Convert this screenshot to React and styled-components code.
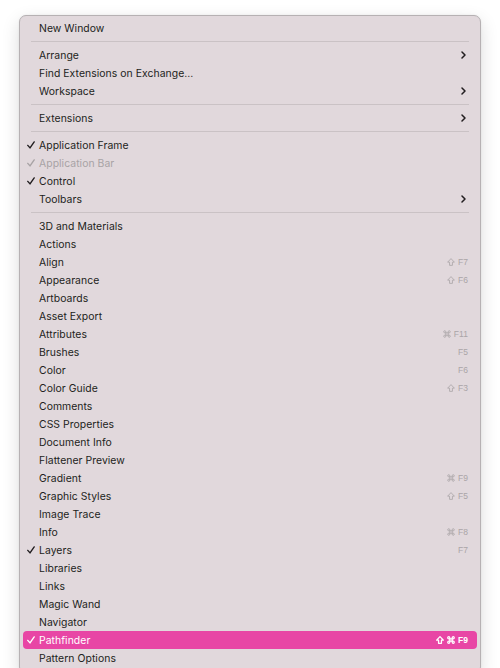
import React from "react";
import styled, { createGlobalStyle } from "styled-components";

const Global = createGlobalStyle`
  html, body { margin: 0; padding: 0; background: #ffffff; height: 668px; overflow: hidden; }
  body { font-family: Inter, "Liberation Sans", sans-serif; -webkit-font-smoothing: antialiased; }
`;

const Page = styled.div`
  padding: 15px 0 0 19px;
`;

const Panel = styled.div`
  width: 456px;
  background: #e1d8dc;
  border: 1px solid #b6b1b3;
  border-radius: 7px;
  box-shadow: 0 6px 18px rgba(0, 0, 0, 0.14), 0 0 2px rgba(0, 0, 0, 0.08);
  padding: 3px 2px 6px;
`;

const Row = styled.div`
  position: relative;
  height: 18px;
  display: flex;
  align-items: center;
  padding: 0 9px 0 16px;
  margin: 0 1px;
  border-radius: 4px;
  font-size: 10.4px;
  letter-spacing: 0.05px;
  color: ${(p) => (p.$active ? "#ffffff" : p.$disabled ? "#a8a3a5" : "#221e20")};
  background: ${(p) => (p.$active ? "#e846a5" : "transparent")};
`;

const Label = styled.span`
  flex: 1;
  white-space: nowrap;
`;

const Check = styled.svg`
  position: absolute;
  left: 4px;
  top: 5px;
  width: 8px;
  height: 8px;
`;

const Chevron = styled.svg`
  width: 5px;
  height: 8px;
  margin-right: 2px;
`;

const Shortcut = styled.span`
  display: flex;
  align-items: center;
  gap: 3px;
  font-family: "Liberation Sans", Arial, sans-serif;
  font-size: 8.5px;
  color: ${(p) => (p.$active ? "#ffffff" : "#aaa5a7")};
  font-weight: ${(p) => (p.$active ? 700 : 400)};
`;

const KeyIcon = styled.svg`
  width: 8px;
  height: 8px;
  flex: none;
`;

const Separator = styled.div`
  height: 9px;
  display: flex;
  align-items: center;
  margin: 0 9px;
  &::after {
    content: "";
    flex: 1;
    height: 1px;
    background: #cac2c5;
  }
`;

const CheckIcon = ({ color }) => (
  <Check viewBox="0 0 8 8">
    <path d="M0.8 4.4 L3 6.9 L7.2 0.9" fill="none" stroke={color} strokeWidth="1.4" strokeLinecap="round" strokeLinejoin="round" />
  </Check>
);

const ChevronIcon = () => (
  <Chevron viewBox="0 0 5 8">
    <path d="M1 1 L4 4 L1 7" fill="none" stroke="#221e20" strokeWidth="1.5" strokeLinecap="round" strokeLinejoin="round" />
  </Chevron>
);

const ShiftIcon = ({ bold }) => (
  <KeyIcon viewBox="0 0 10 10">
    <path
      d="M5 0.8 L9.2 5.2 H6.8 V9.2 H3.2 V5.2 H0.8 Z"
      fill="none"
      stroke="currentColor"
      strokeWidth={bold ? 1.6 : 1}
      strokeLinejoin="round"
    />
  </KeyIcon>
);

const CmdIcon = ({ bold }) => (
  <KeyIcon viewBox="0 0 10 10">
    <path
      d="M3.5 3.5 V6.5 H6.5 V3.5 Z M3.5 3.5 H2.2 A1.3 1.3 0 1 1 3.5 2.2 Z M6.5 3.5 V2.2 A1.3 1.3 0 1 1 7.8 3.5 Z M6.5 6.5 H7.8 A1.3 1.3 0 1 1 6.5 7.8 Z M3.5 6.5 V7.8 A1.3 1.3 0 1 1 2.2 6.5 Z"
      fill="none"
      stroke="currentColor"
      strokeWidth={bold ? 1.5 : 1}
      strokeLinejoin="round"
    />
  </KeyIcon>
);

const items = [
  { label: "New Window" },
  "sep",
  { label: "Arrange", sub: true },
  { label: "Find Extensions on Exchange..." },
  { label: "Workspace", sub: true },
  "sep",
  { label: "Extensions", sub: true },
  "sep",
  { label: "Application Frame", check: true },
  { label: "Application Bar", check: true, disabled: true },
  { label: "Control", check: true },
  { label: "Toolbars", sub: true },
  "sep",
  { label: "3D and Materials" },
  { label: "Actions" },
  { label: "Align", sc: ["shift"], key: "F7" },
  { label: "Appearance", sc: ["shift"], key: "F6" },
  { label: "Artboards" },
  { label: "Asset Export" },
  { label: "Attributes", sc: ["cmd"], key: "F11" },
  { label: "Brushes", key: "F5" },
  { label: "Color", key: "F6" },
  { label: "Color Guide", sc: ["shift"], key: "F3" },
  { label: "Comments" },
  { label: "CSS Properties" },
  { label: "Document Info" },
  { label: "Flattener Preview" },
  { label: "Gradient", sc: ["cmd"], key: "F9" },
  { label: "Graphic Styles", sc: ["shift"], key: "F5" },
  { label: "Image Trace" },
  { label: "Info", sc: ["cmd"], key: "F8" },
  { label: "Layers", check: true, key: "F7" },
  { label: "Libraries" },
  { label: "Links" },
  { label: "Magic Wand" },
  { label: "Navigator" },
  { label: "Pathfinder", check: true, active: true, sc: ["shift", "cmd"], key: "F9" },
  { label: "Pattern Options" },
];

export default function App() {
  return (
    <>
      <Global />
      <Page>
        <Panel>
          {items.map((it, i) =>
            it === "sep" ? (
              <Separator key={i} />
            ) : (
              <Row key={i} $active={it.active} $disabled={it.disabled}>
                {it.check && (
                  <CheckIcon color={it.active ? "#ffffff" : it.disabled ? "#a8a3a5" : "#221e20"} />
                )}
                <Label>{it.label}</Label>
                {it.sub && <ChevronIcon />}
                {it.key && (
                  <Shortcut $active={it.active}>
                    {(it.sc || []).map((s, j) =>
                      s === "shift" ? (
                        <ShiftIcon key={j} bold={it.active} />
                      ) : (
                        <CmdIcon key={j} bold={it.active} />
                      )
                    )}
                    <span>{it.key}</span>
                  </Shortcut>
                )}
              </Row>
            )
          )}
        </Panel>
      </Page>
    </>
  );
}
